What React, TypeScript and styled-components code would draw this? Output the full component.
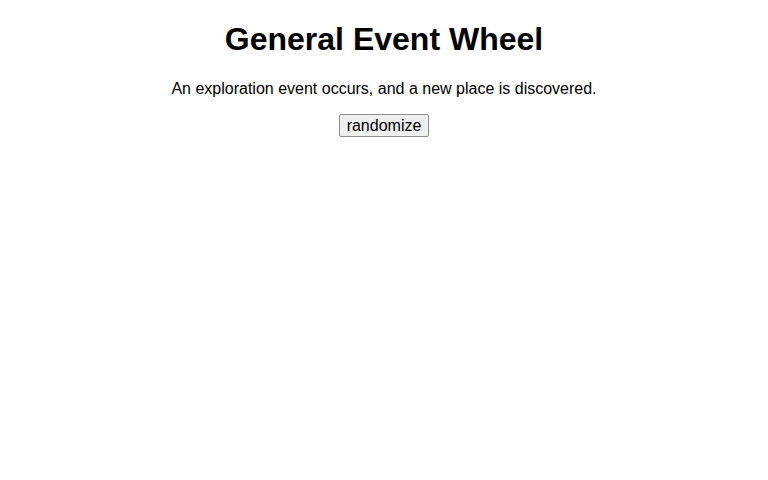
import React, { useState } from "react";
import styled, { createGlobalStyle } from "styled-components";

const GlobalStyle = createGlobalStyle`
  body {
    margin: 0;
    font-family: "Liberation Sans", Arial, sans-serif;
    background: #ffffff;
    color: #000000;
  }
`;

const Page = styled.main`
  display: flex;
  flex-direction: column;
  align-items: center;
  text-align: center;
`;

const Title = styled.h1`
  font-size: 32px;
  font-weight: bold;
  margin: 21px 0 0;
  line-height: 37px;
`;

const EventText = styled.p`
  font-size: 16px;
  margin: 22px 0 0;
  line-height: 18px;
`;

const RandomButton = styled.button`
  margin-top: 16px;
  font-family: "Liberation Sans", Arial, sans-serif;
  font-size: 16px;
  line-height: 17px;
  padding: 2px 7px;
  color: #000;
  background: #efefef;
  border: 1px solid #8f8f8f;
  border-radius: 2px;
  cursor: pointer;
`;

const events = [
  "An exploration event occurs, and a new place is discovered.",
];

export default function App() {
  const [index, setIndex] = useState(0);
  return (
    <>
      <GlobalStyle />
      <Page>
        <Title>General Event Wheel</Title>
        <EventText>{events[index]}</EventText>
        <RandomButton onClick={() => setIndex((index + 1) % events.length)}>
          randomize
        </RandomButton>
      </Page>
    </>
  );
}
